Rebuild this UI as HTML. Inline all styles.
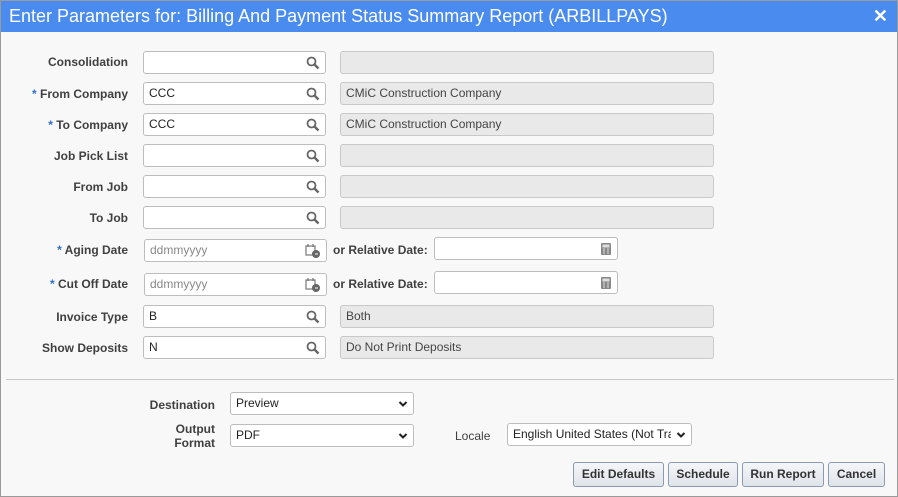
<!DOCTYPE html>
<html><head><style>
*{box-sizing:border-box;margin:0;padding:0}
body{width:898px;height:497px;background:#f8f8f8;font-family:"Liberation Sans",Arial,sans-serif;position:relative;overflow:hidden}
.frame{position:absolute;left:0;top:0;width:898px;height:497px;border:1px solid #9a9a9a;z-index:5}
.title{position:absolute;left:0;top:0;width:898px;height:32px;background:#4a8bef;color:#fff;font-size:18px;line-height:32px;padding-left:9px}
.x{position:absolute;right:10px;top:0;font-size:18px;font-weight:bold;color:#fff;line-height:32px}
.lbl{position:absolute;font-size:12px;font-weight:bold;color:#404040;text-align:right;width:128px;left:0}
.req{color:#2b6fd6}
.in{position:absolute;height:23px;background:#fff;border:1px solid #bdbdbd;border-radius:3px;font-size:12px;color:#222;line-height:21px;padding-left:5px}
.ro{position:absolute;height:23px;background:#e9e9e9;border:1px solid #c9c9c9;border-radius:3px;font-size:12px;color:#444;line-height:21px;padding-left:5px;left:340px;width:374px}
.ph{color:#888}
.mag{position:absolute;right:5px;top:4px}
.rel{position:absolute;font-size:12px;font-weight:bold;color:#404040;left:333px}
.sel{position:absolute;height:23px;background:#fff;border:1px solid #bdbdbd;border-radius:3px;font-size:12px;color:#222;line-height:21px;padding-left:5px}
.chev{position:absolute;right:5px;top:7px}
.btn{position:absolute;top:462px;height:25px;border:1px solid #8a9bb0;border-radius:3px;background:linear-gradient(#f4f6f8,#dfe4ea);font-size:12px;font-weight:bold;color:#333;text-align:center;line-height:23px}
.hr{position:absolute;left:6px;top:379px;width:888px;height:1px;background:#c8c8c8}
</style></head><body>
<div class="frame"></div>
<div class="title">Enter Parameters for: Billing And Payment Status Summary Report (ARBILLPAYS)</div>
<div class="x">✕</div>

<div class="lbl" style="top:55px">Consolidation</div>
<div class="in" style="left:143px;top:51px;width:183px"><svg class="mag" width="14" height="14" viewBox="0 0 14 14"><circle cx="5.5" cy="5.5" r="4" fill="none" stroke="#666" stroke-width="1.8"/><path d="M8.5 8.5L12.5 12.5" stroke="#666" stroke-width="2.4"/></svg></div>
<div class="ro" style="top:51px"></div>

<div class="lbl" style="top:87px"><span class="req">*</span> From Company</div>
<div class="in" style="left:143px;top:82px;width:183px">CCC<svg class="mag" width="14" height="14" viewBox="0 0 14 14"><circle cx="5.5" cy="5.5" r="4" fill="none" stroke="#666" stroke-width="1.8"/><path d="M8.5 8.5L12.5 12.5" stroke="#666" stroke-width="2.4"/></svg></div>
<div class="ro" style="top:82px">CMiC Construction Company</div>

<div class="lbl" style="top:118px"><span class="req">*</span> To Company</div>
<div class="in" style="left:143px;top:113px;width:183px">CCC<svg class="mag" width="14" height="14" viewBox="0 0 14 14"><circle cx="5.5" cy="5.5" r="4" fill="none" stroke="#666" stroke-width="1.8"/><path d="M8.5 8.5L12.5 12.5" stroke="#666" stroke-width="2.4"/></svg></div>
<div class="ro" style="top:113px">CMiC Construction Company</div>

<div class="lbl" style="top:149px">Job Pick List</div>
<div class="in" style="left:143px;top:144px;width:183px"><svg class="mag" width="14" height="14" viewBox="0 0 14 14"><circle cx="5.5" cy="5.5" r="4" fill="none" stroke="#666" stroke-width="1.8"/><path d="M8.5 8.5L12.5 12.5" stroke="#666" stroke-width="2.4"/></svg></div>
<div class="ro" style="top:144px"></div>

<div class="lbl" style="top:180px">From Job</div>
<div class="in" style="left:143px;top:175px;width:183px"><svg class="mag" width="14" height="14" viewBox="0 0 14 14"><circle cx="5.5" cy="5.5" r="4" fill="none" stroke="#666" stroke-width="1.8"/><path d="M8.5 8.5L12.5 12.5" stroke="#666" stroke-width="2.4"/></svg></div>
<div class="ro" style="top:175px"></div>

<div class="lbl" style="top:211px">To Job</div>
<div class="in" style="left:143px;top:206px;width:183px"><svg class="mag" width="14" height="14" viewBox="0 0 14 14"><circle cx="5.5" cy="5.5" r="4" fill="none" stroke="#666" stroke-width="1.8"/><path d="M8.5 8.5L12.5 12.5" stroke="#666" stroke-width="2.4"/></svg></div>
<div class="ro" style="top:206px"></div>

<div class="lbl" style="top:243px"><span class="req">*</span> Aging Date</div>
<div class="in" style="left:144px;top:239px;width:183px"><span class="ph">ddmmyyyy</span><svg class="mag" style="top:3px" width="16" height="16" viewBox="0 0 16 16"><rect x="1" y="3" width="9" height="9" fill="none" stroke="#777" stroke-width="1.2"/><path d="M3 1v3M8 1v3" stroke="#777" stroke-width="1.2"/><circle cx="11" cy="11" r="4" fill="#666"/><path d="M10 11h3" stroke="#fff"/></svg></div>
<div class="rel" style="top:243px">or Relative Date:</div>
<div class="in" style="left:434px;top:237px;width:184px"><svg class="mag" width="12" height="14" viewBox="0 0 12 14"><rect x="1" y="1" width="10" height="12" rx="1" fill="#888"/><rect x="2.5" y="2.5" width="7" height="3" fill="#ddd"/><path d="M3 7h2M7 7h2M3 9h2M7 9h2M3 11h2M7 11h2" stroke="#ddd"/></svg></div>

<div class="lbl" style="top:277px"><span class="req">*</span> Cut Off Date</div>
<div class="in" style="left:144px;top:273px;width:183px"><span class="ph">ddmmyyyy</span><svg class="mag" style="top:3px" width="16" height="16" viewBox="0 0 16 16"><rect x="1" y="3" width="9" height="9" fill="none" stroke="#777" stroke-width="1.2"/><path d="M3 1v3M8 1v3" stroke="#777" stroke-width="1.2"/><circle cx="11" cy="11" r="4" fill="#666"/><path d="M10 11h3" stroke="#fff"/></svg></div>
<div class="rel" style="top:277px">or Relative Date:</div>
<div class="in" style="left:434px;top:271px;width:184px"><svg class="mag" width="12" height="14" viewBox="0 0 12 14"><rect x="1" y="1" width="10" height="12" rx="1" fill="#888"/><rect x="2.5" y="2.5" width="7" height="3" fill="#ddd"/><path d="M3 7h2M7 7h2M3 9h2M7 9h2M3 11h2M7 11h2" stroke="#ddd"/></svg></div>

<div class="lbl" style="top:310px">Invoice Type</div>
<div class="in" style="left:143px;top:305px;width:183px">B<svg class="mag" width="14" height="14" viewBox="0 0 14 14"><circle cx="5.5" cy="5.5" r="4" fill="none" stroke="#666" stroke-width="1.8"/><path d="M8.5 8.5L12.5 12.5" stroke="#666" stroke-width="2.4"/></svg></div>
<div class="ro" style="top:305px">Both</div>

<div class="lbl" style="top:341px">Show Deposits</div>
<div class="in" style="left:143px;top:336px;width:183px">N<svg class="mag" width="14" height="14" viewBox="0 0 14 14"><circle cx="5.5" cy="5.5" r="4" fill="none" stroke="#666" stroke-width="1.8"/><path d="M8.5 8.5L12.5 12.5" stroke="#666" stroke-width="2.4"/></svg></div>
<div class="ro" style="top:336px">Do Not Print Deposits</div>

<div class="hr"></div>

<div class="lbl" style="top:398px;width:215px">Destination</div>
<div class="sel" style="left:230px;top:392px;width:184px">Preview<svg class="chev" width="10" height="8" viewBox="0 0 10 8"><path d="M1.5 2L5 5.5 8.5 2" fill="none" stroke="#222" stroke-width="2"/></svg></div>
<div class="lbl" style="top:422px;width:215px;line-height:14px">Output<br>Format</div>
<div class="sel" style="left:230px;top:424px;width:184px">PDF<svg class="chev" width="10" height="8" viewBox="0 0 10 8"><path d="M1.5 2L5 5.5 8.5 2" fill="none" stroke="#222" stroke-width="2"/></svg></div>
<div class="lbl" style="top:429px;left:455px;width:40px;text-align:left;font-weight:normal">Locale</div>
<div class="sel" style="left:507px;top:423px;width:185px;overflow:hidden;white-space:nowrap">English United States (Not Tra<span style="position:absolute;right:0;top:0;width:20px;height:21px;background:#fff"></span><svg class="chev" width="10" height="8" viewBox="0 0 10 8"><path d="M1.5 2L5 5.5 8.5 2" fill="none" stroke="#222" stroke-width="2"/></svg></div>

<div class="btn" style="left:573px;width:91px">Edit Defaults</div>
<div class="btn" style="left:668px;width:70px">Schedule</div>
<div class="btn" style="left:742px;width:82px">Run Report</div>
<div class="btn" style="left:828px;width:57px">Cancel</div>
</body></html>
